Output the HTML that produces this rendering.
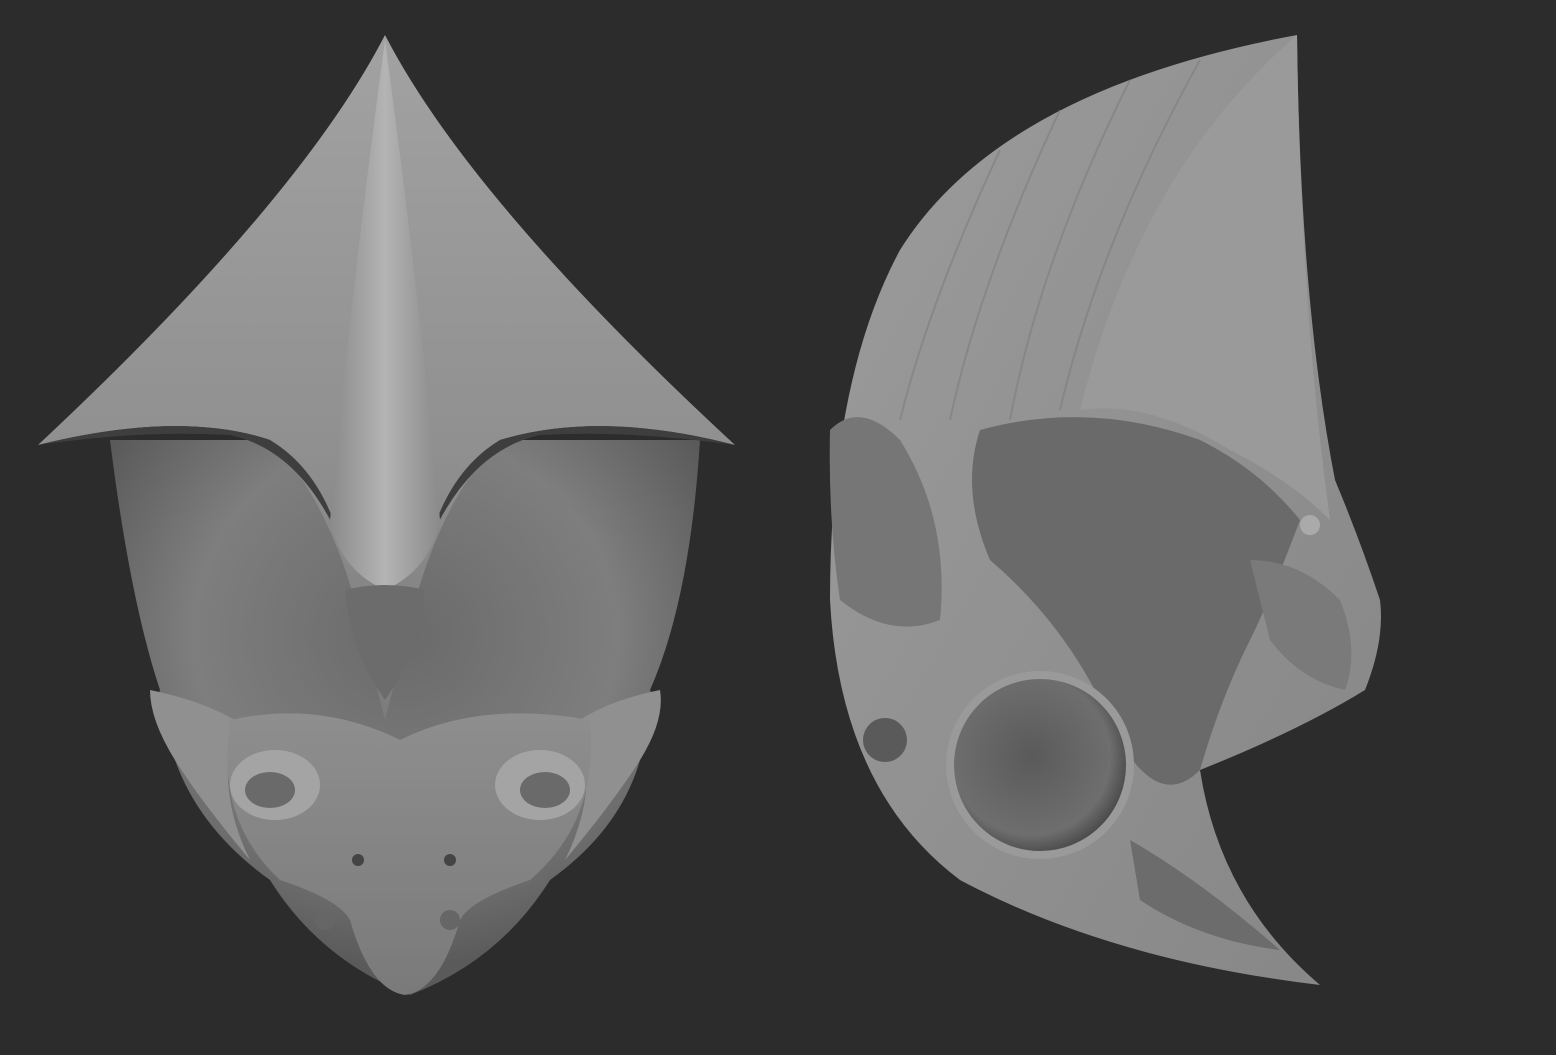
<!DOCTYPE html>
<html><head><meta charset="utf-8"><style>
html,body{margin:0;padding:0;background:#2c2c2c;width:1556px;height:1055px;overflow:hidden}
svg{display:block}
</style></head><body>
<svg width="1556" height="1055" viewBox="0 0 1556 1055" xmlns="http://www.w3.org/2000/svg">
<defs>
<linearGradient id="fan" x1="0" y1="0" x2="0" y2="1">
<stop offset="0" stop-color="#a2a2a2"/><stop offset="0.6" stop-color="#909090"/><stop offset="1" stop-color="#7c7c7c"/></linearGradient>
<radialGradient id="body" cx="0.5" cy="0.35" r="0.6">
<stop offset="0" stop-color="#6a6a6a"/><stop offset="0.6" stop-color="#7e7e7e"/><stop offset="1" stop-color="#5a5a5a"/></radialGradient>
<linearGradient id="ridge" x1="0" y1="0" x2="1" y2="0">
<stop offset="0" stop-color="#8a8a8a"/><stop offset="0.5" stop-color="#b4b4b4"/><stop offset="1" stop-color="#8a8a8a"/></linearGradient>
<linearGradient id="face" x1="0" y1="0" x2="0" y2="1">
<stop offset="0" stop-color="#8e8e8e"/><stop offset="1" stop-color="#7a7a7a"/></linearGradient>
<linearGradient id="rfan" x1="0" y1="0" x2="1" y2="1">
<stop offset="0" stop-color="#9c9c9c"/><stop offset="1" stop-color="#868686"/></linearGradient>
<radialGradient id="reye" cx="0.45" cy="0.45" r="0.55">
<stop offset="0" stop-color="#5a5a5a"/><stop offset="0.8" stop-color="#6e6e6e"/><stop offset="1" stop-color="#4a4a4a"/></radialGradient>
</defs>

<!-- LEFT SCULPT -->
<path d="M110,440 Q130,600 160,690 Q150,720 175,760 Q200,830 270,880 Q320,960 410,995 Q500,960 550,880 Q620,830 640,760 Q665,720 650,690 Q690,600 700,440 Z" fill="url(#body)"/>
<path d="M150,690 Q200,700 235,720 Q215,790 250,860 Q200,800 175,760 Q150,720 150,690 Z" fill="#909090"/>
<path d="M660,690 Q610,700 580,720 Q600,790 565,860 Q615,800 640,760 Q665,720 660,690 Z" fill="#909090"/>
<path d="M230,720 Q320,700 400,740 Q480,700 590,720 Q600,820 530,880 Q470,900 460,920 Q440,990 405,995 Q370,990 350,920 Q340,900 280,880 Q215,820 230,720 Z" fill="url(#face)"/>
<ellipse cx="275" cy="785" rx="45" ry="35" fill="#a4a4a4"/>
<ellipse cx="540" cy="785" rx="45" ry="35" fill="#a4a4a4"/>
<ellipse cx="270" cy="790" rx="25" ry="18" fill="#6a6a6a"/>
<ellipse cx="545" cy="790" rx="25" ry="18" fill="#6a6a6a"/>
<circle cx="325" cy="920" r="10" fill="#666"/><circle cx="450" cy="920" r="10" fill="#666"/>
<circle cx="358" cy="860" r="6" fill="#444"/><circle cx="450" cy="860" r="6" fill="#444"/>
<path d="M385,35 Q300,200 38,445 Q180,410 270,440 Q330,500 360,620 L385,720 L410,620 Q440,500 500,440 Q600,410 735,445 Q470,200 385,35 Z" fill="url(#fan)"/>
<path d="M38,445 Q180,410 270,440 Q320,470 340,540 Q300,450 230,435 Q140,430 38,445 Z" fill="#3e3e3e"/>
<path d="M735,445 Q600,410 500,440 Q450,470 430,540 Q470,450 540,435 Q630,430 735,445 Z" fill="#3e3e3e"/>
<path d="M385,40 Q350,300 330,520 Q340,570 385,590 Q430,570 440,520 Q420,300 385,40 Z" fill="url(#ridge)"/>
<path d="M345,590 Q385,580 425,590 Q420,650 385,700 Q350,650 345,590 Z" fill="#6c6c6c"/>

<!-- RIGHT SCULPT -->
<path d="M1297,35 Q1000,90 900,250 Q830,380 830,600 Q840,790 960,880 Q1110,960 1320,985 Q1220,900 1200,770 Q1300,730 1365,690 Q1385,640 1380,600 Q1360,540 1335,480 Q1300,300 1297,35 Z" fill="url(#rfan)"/>
<path d="M1297,35 Q1140,170 1080,410 Q1150,400 1230,450 Q1290,480 1330,520 Q1300,300 1297,35 Z" fill="#9a9a9a"/>
<path d="M980,430 Q1090,400 1200,440 Q1260,470 1300,520 Q1270,600 1250,640 Q1220,700 1200,770 Q1150,820 1100,700 Q1060,620 990,560 Q960,490 980,430 Z" fill="#6a6a6a"/>
<path d="M830,430 Q860,400 900,440 Q950,520 940,620 Q890,640 840,600 Q828,520 830,430 Z" fill="#767676"/>
<circle cx="1040" cy="765" r="90" fill="url(#reye)"/>
<circle cx="1040" cy="765" r="90" fill="none" stroke="#9a9a9a" stroke-width="8"/>
<circle cx="1310" cy="525" r="10" fill="#aaa"/>
<circle cx="885" cy="740" r="22" fill="#5a5a5a"/>
<path d="M1250,560 Q1300,560 1340,600 Q1360,650 1345,690 Q1300,680 1270,640 Z" fill="#7a7a7a"/>
<path d="M1130,840 Q1200,880 1280,950 Q1200,940 1140,900 Z" fill="#6c6c6c"/>
<g stroke="#7e7e7e" stroke-width="2" fill="none" opacity="0.6">
<path d="M1000,150 Q930,300 900,420"/><path d="M1060,110 Q980,280 950,420"/><path d="M1130,80 Q1040,260 1010,420"/><path d="M1200,60 Q1100,240 1060,410"/>
</g>
</svg>
</body></html>
